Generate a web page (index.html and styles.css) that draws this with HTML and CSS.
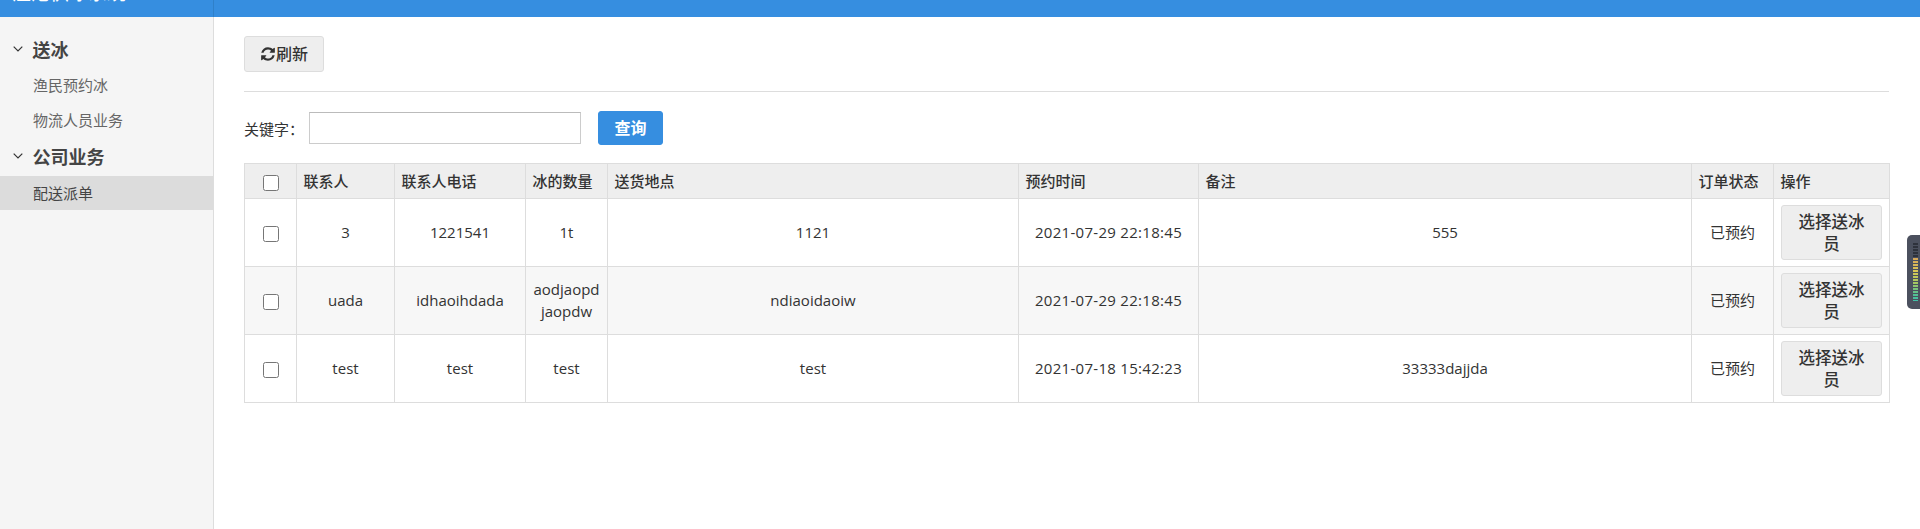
FILE: index.html
```html
<!DOCTYPE html>
<html lang="zh-CN">
<head>
<meta charset="utf-8">
<title>配送派单</title>
<link rel="stylesheet" href="styles.css">
</head>
<body>
<header class="topbar">
  <div class="brand"><span class="brand-text">渔港供冰系统</span></div>
  <div class="top-right">
    <span class="user">管理员</span>
    <span class="logout">退出</span>
  </div>
</header>
<div class="layout">
  <nav class="sidebar">
    <div class="nav-head">
      <svg class="chev" viewBox="0 0 10 6"><path d="M.7.7 5 5 9.3.7"/></svg>
      <span>送冰</span>
    </div>
    <a class="nav-item">渔民预约冰</a>
    <a class="nav-item">物流人员业务</a>
    <div class="nav-head">
      <svg class="chev" viewBox="0 0 10 6"><path d="M.7.7 5 5 9.3.7"/></svg>
      <span>公司业务</span>
    </div>
    <a class="nav-item active">配送派单</a>
  </nav>
  <main class="content">
    <div class="toolbar">
      <button class="btn refresh" type="button">
        <svg class="icon" viewBox="0 0 1792 1792"><path d="M1639 1056q0 5-1 7-64 268-268 434.5t-478 166.5q-146 0-282.5-55t-243.5-157l-129 129q-19 19-45 19t-45-19-19-45v-448q0-26 19-45t45-19h448q26 0 45 19t19 45-19 45l-137 137q71 66 161 102t187 36q134 0 250-65t186-179q11-17 53-117 8-23 30-23h192q13 0 22.5 9.5t9.5 22.5zm25-800v448q0 26-19 45t-45 19h-448q-26 0-45-19t-19-45 19-45l138-138q-148-137-349-137-134 0-250 65t-186 179q-11 17-53 117-8 23-30 23h-199q-13 0-22.5-9.5t-9.5-22.5v-7q65-268 270-434.5t480-166.5q146 0 284 55.5t245 156.5l130-129q19-19 45-19t45 19 19 45z"/></svg>刷新
      </button>
    </div>
    <hr class="rule">
    <form class="search">
      <label class="search-label" for="kw">关键字：</label>
      <input class="search-input" id="kw" type="text">
      <button class="btn primary" type="button">查询</button>
    </form>
    <table class="grid">
      <colgroup>
        <col class="c-check"><col class="c-name"><col class="c-phone"><col class="c-qty"><col class="c-addr"><col class="c-time"><col class="c-note"><col class="c-status"><col class="c-op">
      </colgroup>
      <thead>
        <tr>
          <th class="center"><input class="check" type="checkbox"></th>
          <th>联系人</th><th>联系人电话</th><th>冰的数量</th><th>送货地点</th><th>预约时间</th><th>备注</th><th>订单状态</th><th>操作</th>
        </tr>
      </thead>
      <tbody>
        <tr>
          <td><input class="check" type="checkbox"></td>
          <td>3</td><td>1221541</td><td>1t</td><td>1121</td><td class="time">2021-07-29 22:18:45</td><td>555</td><td>已预约</td>
          <td class="op"><button class="btn assign" type="button">选择送冰员</button></td>
        </tr>
        <tr class="alt">
          <td><input class="check" type="checkbox"></td>
          <td>uada</td><td>idhaoihdada</td><td class="wrap">aodjaopdjaopdw</td><td>ndiaoidaoiw</td><td class="time">2021-07-29 22:18:45</td><td></td><td>已预约</td>
          <td class="op"><button class="btn assign" type="button">选择送冰员</button></td>
        </tr>
        <tr>
          <td><input class="check" type="checkbox"></td>
          <td>test</td><td>test</td><td>test</td><td>test</td><td class="time">2021-07-18 15:42:23</td><td>33333dajjda</td><td>已预约</td>
          <td class="op"><button class="btn assign" type="button">选择送冰员</button></td>
        </tr>
      </tbody>
    </table>
  </main>
</div>
<aside class="meter"><div class="meter-bars"></div></aside>
</body>
</html>
```
FILE: styles.css
```css
* { box-sizing: border-box; }
html, body { height: 529px; }
body {
  margin: 0;
  overflow: hidden;
  display: flex;
  flex-direction: column;
  background: #fff;
  color: #333;
  font-family: "Open Sans", "Noto Sans CJK SC", sans-serif;
  font-size: 15px;
}

/* top bar, scrolled so only its lower strip shows */
.topbar {
  flex: none;
  height: 17px;
  display: flex;
  justify-content: space-between;
  overflow: hidden;
  background: #368ee0;
  color: #fff;
}
.brand {
  width: 214px;
  padding-left: 12px;
  border-right: 1px solid #2f80c9;
}
.brand-text {
  display: block;
  margin-top: -17px;
  font-size: 19px;
  line-height: 20px;
  white-space: nowrap;
}
.top-right {
  display: flex;
  padding-right: 15px;
  margin-top: -18px;
  font-size: 15px;
  line-height: 20px;
  gap: 112px;
}

.layout { flex: 1; display: flex; min-height: 0; }

/* sidebar */
.sidebar {
  flex: none;
  width: 214px;
  padding-top: 16px;
  display: flex;
  flex-direction: column;
  gap: 1.7px;
  background: #f5f5f5;
  border-right: 1px solid #ddd;
}
.nav-head {
  height: 34px;
  display: flex;
  align-items: center;
  padding: 0 0 3px 13px;
  gap: 9.5px;
  font-size: 18px;
  font-weight: 700;
  color: #444;
}
.chev { width: 10px; height: 6px; }
.chev path { fill: none; stroke: #333; stroke-width: 1.2; }
.nav-item {
  height: 34px;
  display: flex;
  align-items: center;
  padding: 0 0 3px 33px;
  font-size: 15px;
  color: #666;
}
.nav-item.active { padding-bottom: 1px; background: #dcdcdc; color: #444; }

/* main */
.content { flex: 1; min-width: 0; padding: 19px 31px 0 30px; }
.toolbar { display: flex; }
.btn {
  font-family: inherit;
  font-size: 16px;
  line-height: 22px;
  border-radius: 3px;
  border: 1px solid #ddd;
  background: #eee;
  color: #333;
  padding: 6px 12px;
}
.refresh {
  width: 80px;
  height: 36px;
  display: flex;
  align-items: center;
  justify-content: center;
  padding: 0;
  font-weight: 500;
}
.icon { width: 16px; height: 16px; fill: #333; }
.rule { height: 1px; margin: 19px 0; border: 0; background: #ddd; }
.search { display: flex; align-items: center; height: 34px; }
.search-label { width: 65px; font-size: 15px; }
.search-input {
  width: 272px;
  height: 32px;
  margin: 0;
  border: 1px solid #ccc;
  border-top-color: #bbb;
  outline: 0;
}
.primary {
  width: 65px;
  height: 34px;
  margin-left: 17px;
  padding: 0;
  border-color: #368ee0;
  background: #368ee0;
  color: #fff;
  font-weight: 700;
}

/* table */
.grid {
  width: 1645px;
  margin-top: 18px;
  table-layout: fixed;
  border-collapse: collapse;
  color: #333;
}
.c-check { width: 52px; }
.c-name { width: 98px; }
.c-phone { width: 131px; }
.c-qty { width: 82px; }
.c-addr { width: 411px; }
.c-time { width: 180px; }
.c-note { width: 493px; }
.c-status { width: 82px; }
.c-op { width: 116px; }
.grid th, .grid td { border: 1px solid #ddd; }
.grid th {
  height: 35px;
  padding: 0 6.5px 2px;
  background: #eee;
  text-align: left;
  font-size: 15px;
  font-weight: 500;
}
.grid th.center { text-align: center; padding-bottom: 0; }
.grid td {
  height: 68px;
  padding: 0 6px 2px;
  text-align: center;
  line-height: 22px;
}
.time { letter-spacing: .3px; }
.wrap { word-break: break-all; }
.alt td { background: #f7f7f7; }
.check { display: block; width: 16px; height: 16px; margin: 4px auto 0; }
.grid td.op { padding: 0 7px; }
.assign {
  display: block;
  width: 101px;
  height: 55px;
  padding: 4px 12px;
  font-size: 16.5px;
  font-weight: 500;
}

/* floating level meter at the window edge */
.meter {
  position: fixed;
  top: 235px;
  right: 0;
  width: 13px;
  height: 74px;
  padding: 8px 0 0 6px;
  background: #4b505e;
  border-radius: 5px 0 0 5px;
}
.meter-bars {
  width: 5px;
  height: 58px;
  background:
    repeating-linear-gradient(to bottom, transparent 0 2px, #4b505e 2px 3px),
    linear-gradient(to bottom, #2e323c 0 24%, #d8a75a 26%, #d9c655 48%, #a8c860 68%, #55c090 88%, #3fc0a8 100%);
}
```
